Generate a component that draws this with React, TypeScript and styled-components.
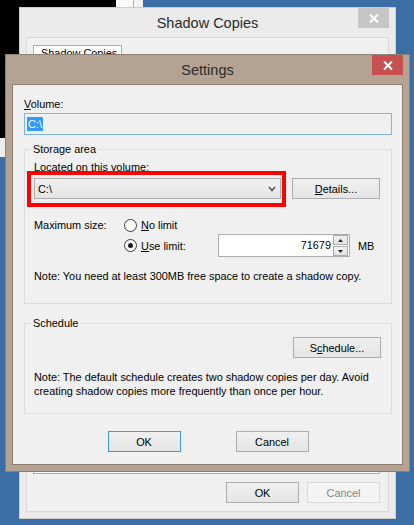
import React from "react";
import styled, { createGlobalStyle } from "styled-components";

const GlobalStyle = createGlobalStyle`
  html, body {
    margin: 0;
    padding: 0;
    background: #3a6ea5;
  }
`;

const Desktop = styled.div`
  position: relative;
  width: 414px;
  height: 525px;
  overflow: hidden;
  background: #3a6ea5;
  font-family: "Liberation Sans", Arial, sans-serif;
  font-size: 10.9px;
  color: #000;
`;

// other application windows peeking out behind the dialogs
const BackWindow = styled.div<{ $x: number; $y: number; $w: number; $h: number; $bg: string; $edge?: string }>`
  position: absolute;
  box-sizing: border-box;
  left: ${p => p.$x}px;
  top: ${p => p.$y}px;
  width: ${p => p.$w}px;
  height: ${p => p.$h}px;
  background: ${p => p.$bg};
  border-right: ${p => (p.$edge ? `1px solid ${p.$edge}` : "none")};
`;

const Window = styled.div<{ $x: number; $y: number; $w: number; $h: number; $z: number; $active?: boolean }>`
  position: absolute;
  z-index: ${p => p.$z};
  box-sizing: border-box;
  left: ${p => p.$x}px;
  top: ${p => p.$y}px;
  width: ${p => p.$w}px;
  height: ${p => p.$h}px;
  display: flex;
  flex-direction: column;
  padding: 0 6px 6px 6px;
  border: 1px solid ${p => (p.$active ? "#8f8073" : "#cdcdcd")};
  background: ${p => (p.$active ? "#b4a293" : "#ebebeb")};
`;

const TitleBar = styled.div`
  position: relative;
  height: 29px;
  flex: none;
  display: flex;
  align-items: center;
  justify-content: center;
  font-size: 14.5px;
  color: #2b2b2b;
`;

const CloseButton = styled.div<{ $active?: boolean }>`
  position: absolute;
  top: 0;
  right: 0;
  width: 31px;
  height: 20px;
  display: flex;
  align-items: center;
  justify-content: center;
  background: ${p => (p.$active ? "#c75050" : "#c6c6c6")};
`;

const Client = styled.div<{ $active?: boolean }>`
  flex: 1;
  min-height: 0;
  display: flex;
  flex-direction: column;
  background: #f0f0f0;
  border: 1px solid ${p => (p.$active ? "#8c7c6f" : "#dadada")};
`;

const ShadowBody = styled(Client)`
  padding: 7px 8px 8px 6px;
`;

const SettingsBody = styled(Client)`
  padding: 12px 10px 0 11px;
`;

const TabStrip = styled.div`
  display: flex;
  height: 20px;
  position: relative;
  z-index: 1;
`;

const Tab = styled.div`
  box-sizing: border-box;
  width: 89px;
  height: 21px;
  padding: 0 0 0 7px;
  line-height: 14px;
  background: #fff;
  border: 1px solid #acacac;
  border-bottom: none;
`;

const TabPage = styled.div`
  flex: 1;
  background: #fff;
  border: 1px solid #adadad;
`;

const ButtonBar = styled.div<{ $align: "end" | "center"; $gap: number; $top?: number }>`
  display: flex;
  justify-content: ${p => (p.$align === "end" ? "flex-end" : "center")};
  gap: ${p => p.$gap}px;
  margin-top: ${p => p.$top ?? 0}px;
`;

const Button = styled.button<{ $width?: number; $default?: boolean }>`
  box-sizing: border-box;
  width: ${p => p.$width ?? 73}px;
  height: 21px;
  padding: 0;
  margin: 0;
  font: inherit;
  color: #000;
  background: linear-gradient(#f0f0f0, #e5e5e5);
  border: 1px solid ${p => (p.$default ? "#3399ff" : "#acacac")};
  &:disabled {
    color: #838383;
    background: #f4f4f4;
    border-color: #d9d9d9;
  }
`;

const Key = styled.span`
  text-decoration: underline;
`;

const Label = styled.div<{ $top?: number }>`
  line-height: 14px;
  margin-top: ${p => p.$top ?? 0}px;
  white-space: nowrap;
`;

const TextBox = styled.div<{ $focused?: boolean }>`
  box-sizing: border-box;
  height: 22px;
  margin-top: 2px;
  padding: 3px 2px;
  background: #f0f0f0;
  border: 1px solid ${p => (p.$focused ? "#7eb4ea" : "#abadb3")};
  line-height: 14px;
`;

const Selection = styled.span`
  display: inline-block;
  background: #3399ff;
  color: #fff;
  padding: 0 1px;
`;

const Group = styled.fieldset<{ $top: number; $bottom: number }>`
  margin: ${p => p.$top}px 0 0 0;
  padding: 0 10px ${p => p.$bottom}px 9px;
  min-width: 0;
  border: 1px solid #dcdcdc;
`;

const Legend = styled.legend`
  margin-left: -3px;
  padding: 0 2px;
  line-height: 14px;
`;

const ComboRow = styled.div`
  display: flex;
  align-items: center;
  gap: 11px;
  margin-top: 4px;
`;

const ComboWrap = styled.div`
  position: relative;
  flex: none;
`;

const Combo = styled.div`
  box-sizing: border-box;
  width: 247px;
  height: 21px;
  display: flex;
  align-items: center;
  justify-content: space-between;
  padding: 0 4px 0 3px;
  background: linear-gradient(#f0f0f0, #e5e5e5);
  border: 1px solid #acacac;
`;

// red annotation drawn over the screenshot
const Highlight = styled.div`
  position: absolute;
  top: -7px;
  left: -7px;
  right: -5px;
  bottom: -8px;
  border: 4px solid #ff0000;
  pointer-events: none;
`;

const SizeGrid = styled.div`
  display: grid;
  grid-template-columns: 90px 94px 132px auto;
  grid-template-rows: 18px 23px;
  align-items: center;
  margin-top: 17px;
`;

const Radio = styled.label`
  display: flex;
  align-items: center;
  gap: 4px;
  white-space: nowrap;
`;

const RadioDot = styled.span<{ $checked?: boolean }>`
  box-sizing: border-box;
  width: 13px;
  height: 13px;
  border-radius: 50%;
  border: 1px solid #3c3c3c;
  background: #fff;
  display: flex;
  align-items: center;
  justify-content: center;
  &::after {
    content: "";
    width: 5px;
    height: 5px;
    border-radius: 50%;
    background: ${p => (p.$checked ? "#1a1a1a" : "transparent")};
  }
`;

const SpinBox = styled.div`
  box-sizing: border-box;
  width: 132px;
  height: 23px;
  display: flex;
  align-items: stretch;
  background: #fff;
  border: 1px solid #abadb3;
`;

const SpinValue = styled.div`
  flex: 1;
  text-align: right;
  padding-right: 2px;
  line-height: 20px;
`;

const SpinButtons = styled.div`
  width: 15px;
  display: flex;
  flex-direction: column;
  gap: 1px;
  padding: 0 1px 0 0;
`;

const SpinButton = styled.div`
  flex: 1;
  display: flex;
  align-items: center;
  justify-content: center;
  background: linear-gradient(#f2f2f2, #e2e2e2);
  border: 1px solid #acacac;
`;

const Unit = styled.span`
  padding-left: 8px;
`;

const Note = styled.div<{ $top: number }>`
  margin-top: ${p => p.$top}px;
  line-height: 14px;
  white-space: nowrap;
`;

const CloseGlyph = () => (
  <svg width="10" height="9" viewBox="0 0 10 9">
    <path d="M1 0.5 L9 8.5 M9 0.5 L1 8.5" stroke="#fff" strokeWidth="2" />
  </svg>
);

const Chevron = () => (
  <svg width="8" height="6" viewBox="0 0 8 6">
    <path d="M1 1 L4 4.5 L7 1" fill="none" stroke="#555" strokeWidth="1.6" />
  </svg>
);

const Arrow = ({ up }: { up?: boolean }) => (
  <svg width="5" height="3" viewBox="0 0 5 3">
    <path d={up ? "M0 3 L2.5 0 L5 3 Z" : "M0 0 L5 0 L2.5 3 Z"} fill="#222" />
  </svg>
);

export default function App() {
  return (
    <Desktop>
      <GlobalStyle />
      <BackWindow $x={0} $y={0} $w={116} $h={138} $bg="#000" />
      <BackWindow $x={116} $y={0} $w={18} $h={7} $bg="#fafafa" $edge="#b4b4b4" />
      <BackWindow $x={134} $y={0} $w={9} $h={7} $bg="#f4f4f4" />
      <BackWindow $x={0} $y={138} $w={19} $h={19} $bg="#eeeeee" />

      <Window $x={19} $y={7} $w={377} $h={512} $z={1}>
        <TitleBar>
          Shadow Copies
          <CloseButton>
            <CloseGlyph />
          </CloseButton>
        </TitleBar>
        <ShadowBody>
          <TabStrip>
            <Tab>Shadow Copies</Tab>
          </TabStrip>
          <TabPage />
          <ButtonBar $align="end" $gap={8} $top={8}>
            <Button>OK</Button>
            <Button disabled>Cancel</Button>
          </ButtonBar>
        </ShadowBody>
      </Window>

      <Window $x={5} $y={54} $w={405} $h={418} $z={2} $active>
        <TitleBar>
          Settings
          <CloseButton $active>
            <CloseGlyph />
          </CloseButton>
        </TitleBar>
        <SettingsBody $active>
          <Label>
            <Key>V</Key>olume:
          </Label>
          <TextBox $focused>
            <Selection>C:\</Selection>
          </TextBox>

          <Group $top={7} $bottom={20}>
            <Legend>Storage area</Legend>
            <Label $top={4}>
              <Key>L</Key>ocated on this volume:
            </Label>
            <ComboRow>
              <ComboWrap>
                <Combo>
                  <span>C:\</span>
                  <Chevron />
                </Combo>
                <Highlight />
              </ComboWrap>
              <Button $width={88}>
                <Key>D</Key>etails...
              </Button>
            </ComboRow>
            <SizeGrid>
              <Label>Maximum size:</Label>
              <Radio>
                <RadioDot />
                <span>
                  <Key>N</Key>o limit
                </span>
              </Radio>
              <span />
              <span />
              <span />
              <Radio>
                <RadioDot $checked />
                <span>
                  <Key>U</Key>se limit:
                </span>
              </Radio>
              <SpinBox>
                <SpinValue>71679</SpinValue>
                <SpinButtons>
                  <SpinButton>
                    <Arrow up />
                  </SpinButton>
                  <SpinButton>
                    <Arrow />
                  </SpinButton>
                </SpinButtons>
              </SpinBox>
              <Unit>MB</Unit>
            </SizeGrid>
            <Note $top={12}>Note: You need at least 300MB free space to create a shadow copy.</Note>
          </Group>

          <Group $top={12} $bottom={15}>
            <Legend>Schedule</Legend>
            <ButtonBar $align="end" $gap={0} $top={7}>
              <Button $width={88}>
                S<Key>c</Key>hedule...
              </Button>
            </ButtonBar>
            <Note $top={12}>
              Note: The default schedule creates two shadow copies per day. Avoid
              <br />
              creating shadow copies more frequently than once per hour.
            </Note>
          </Group>

          <ButtonBar $align="center" $gap={55} $top={17}>
            <Button $default>OK</Button>
            <Button>Cancel</Button>
          </ButtonBar>
        </SettingsBody>
      </Window>
    </Desktop>
  );
}
